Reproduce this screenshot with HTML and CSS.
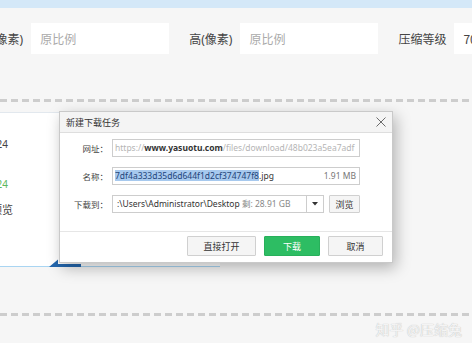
FILE: index.html
```html
<!DOCTYPE html>
<html lang="zh-CN">
<head>
  <meta charset="UTF-8" />
  <title>压缩兔 - 新建下载任务</title>
  <link rel="stylesheet" href="styles.css">
</head>
<body>
  <div class="page">
    <div class="top-band"></div>

    <div class="settings">
      <span class="set-label first">宽(像素)</span>
      <input class="set-input" type="text" placeholder="原比例" />
      <span class="set-label">高(像素)</span>
      <input class="set-input" type="text" placeholder="原比例" />
      <span class="set-label">压缩等级</span>
      <input class="set-input short" type="text" value="70" />
    </div>

    <div class="dashed"></div>

    <div class="workspace">
      <div class="file-card">
        <div class="card-info">
          <div class="info-line">1024×1024</div>
          <div class="info-line ok">1024×1024</div>
          <div class="info-line link">在线预览</div>
        </div>
        <div class="card-foot">
          <svg class="card-tab" width="32" height="8" viewBox="0 0 32 8">
            <polygon points="0,8 9,0.5 9,5 32,5 32,8" fill="#2467ae" />
          </svg>
        </div>
      </div>
    </div>

    <div class="dashed"></div>

    <div class="bottom">
      <span class="watermark">知乎 @压缩兔</span>
    </div>

    <!-- 下载对话框 -->
    <div class="dialog">
      <div class="dialog-title">
        <span>新建下载任务</span>
        <svg class="close" width="10" height="10" viewBox="0 0 10 10">
          <path d="M0.5 0.5 L9.5 9.5 M9.5 0.5 L0.5 9.5" stroke="#6b6b6b" stroke-width="1" fill="none" />
        </svg>
      </div>

      <div class="dialog-body">
        <div class="row">
          <span class="row-label">网址：</span>
          <div class="field url"><span class="dim">https://</span><b>www.yasuotu.com</b><span class="dim">/files/download/48b023a5ea7adf</span></div>
        </div>
        <div class="row">
          <span class="row-label">名称：</span>
          <div class="field name">
            <span><span class="sel">7df4a333d35d6d644f1d2cf374747f8</span>.jpg</span>
            <span class="size">1.91 MB</span>
          </div>
        </div>
        <div class="row">
          <span class="row-label">下载到：</span>
          <div class="field path">:\Users\Administrator\Desktop <span class="dim2">剩: 28.91 GB</span></div>
          <div class="drop">
            <svg width="6" height="4" viewBox="0 0 6 4"><polygon points="0,0 6,0 3,3.5" fill="#333" /></svg>
          </div>
          <button class="btn browse">浏览</button>
        </div>
      </div>

      <div class="dialog-foot">
        <button class="btn open">直接打开</button>
        <button class="btn primary">下载</button>
        <button class="btn cancel">取消</button>
      </div>
    </div>
  </div>
</body>
</html>
```

FILE: styles.css
```css
* { box-sizing: border-box; }

body {
  margin: 0;
  background: #ffffff;
  font-family: "Noto Sans", "Noto Sans CJK SC", sans-serif;
  color: #333;
}

.page {
  position: relative;
  width: 472px;
  height: 343px;
  background: #f6f6f6;
  overflow: hidden;
}

.top-band {
  height: 8px;
  background: #d4e8f8;
}

/* 尺寸设置行 */
.settings {
  display: flex;
  align-items: center;
  margin-top: 15px;
  margin-left: -20px;
  white-space: nowrap;
}

.set-label {
  font-size: 12px;
  color: #444;
  margin-left: 20px;
  margin-right: 8px;
}

.set-label.first {
  margin-left: 0;
}

.set-input {
  width: 138px;
  height: 31px;
  border: none;
  background: #ffffff;
  padding: 0 9px;
  font-family: "Noto Sans CJK SC", sans-serif;
  font-size: 12px;
  color: #444;
  outline: none;
}

.set-input::placeholder {
  color: #aaa;
}

.set-input.short {
  width: 60px;
  padding-left: 9px;
}

.dashed {
  height: 3px;
  background: repeating-linear-gradient(to right, #cdcdcd 0 7px, transparent 7px 11px);
}

.settings + .dashed {
  margin-top: 45px;
}

/* 文件卡片区域 */
.workspace {
  height: 211px;
  padding-top: 10px;
}

.file-card {
  width: 220px;
  height: 155px;
  background: #ffffff;
  border-top: 1px solid #e2e8ee;
  display: flex;
  flex-direction: column;
}

.card-info {
  width: 8px;
  padding-top: 24px;
  display: flex;
  flex-direction: column;
  align-items: flex-end;
  flex: 1;
}

.info-line {
  font-size: 10px;
  line-height: 14px;
  color: #444;
  white-space: nowrap;
}

.info-line.ok {
  color: #5cb85c;
  margin-top: 26px;
}

.info-line.link {
  margin-top: 12px;
  margin-right: -5px;
  font-size: 11px;
}

.card-foot {
  height: 8px;
  border-bottom: 1px solid #a9d5f2;
  display: flex;
  align-items: flex-end;
}

.card-tab {
  display: block;
  margin-left: 49px;
  margin-bottom: -1px;
}

.bottom {
  display: flex;
  justify-content: flex-end;
  padding: 3px 10px 0 0;
}

.watermark {
  font-family: "Noto Sans CJK SC", sans-serif;
  font-size: 14px;
  color: #f4f4f4;
  text-shadow: 0 0 1px #b0b0b0;
}

/* 对话框 */
.dialog {
  position: absolute;
  left: 59px;
  top: 111px;
  width: 334px;
  height: 152px;
  background: #ffffff;
  border: 1px solid #c9c9c9;
  box-shadow: 3px 5px 14px rgba(0, 0, 0, 0.28);
  display: flex;
  flex-direction: column;
}

.dialog-title {
  height: 21px;
  background: #f4f4f4;
  border-bottom: 1px solid #dedede;
  display: flex;
  align-items: center;
  justify-content: space-between;
  padding: 0 6px 0 6px;
  font-size: 9px;
  color: #333;
}

.dialog-body {
  flex: 1;
  padding-top: 6px;
  display: flex;
  flex-direction: column;
  gap: 10px;
}

.row {
  display: flex;
  align-items: center;
  height: 18px;
}

.row-label {
  width: 48px;
  text-align: right;
  font-size: 8.5px;
  color: #444;
  margin-right: 4px;
  white-space: nowrap;
}

.field {
  height: 18px;
  width: 248px;
  border: 1px solid #cdcdcd;
  background: #fff;
  font-size: 8.5px;
  line-height: 16px;
  padding: 0 2px;
  white-space: nowrap;
  overflow: hidden;
  color: #333;
}

.url .dim {
  color: #b5b5b5;
}

.url b {
  color: #333;
  font-weight: 700;
}

.name {
  display: flex;
  justify-content: space-between;
}

.sel {
  background: #a7c9ee;
  color: #23457a;
}

.size {
  color: #777;
  padding-right: 1px;
}

.path {
  width: 195px;
  padding-left: 4px;
}

.dim2 {
  color: #888;
}

.drop {
  width: 17px;
  height: 18px;
  border: 1px solid #cdcdcd;
  border-left: none;
  background: #fff;
  display: flex;
  align-items: center;
  justify-content: center;
}

.btn {
  font-family: "Noto Sans CJK SC", sans-serif;
  font-size: 9px;
  color: #333;
  background: #f5f5f5;
  border: 1px solid #d0d0d0;
  border-radius: 1px;
  padding: 0;
  cursor: pointer;
}

.browse {
  width: 31px;
  height: 18px;
  margin-left: 5px;
}

.dialog-foot {
  height: 31px;
  border-top: 1px solid #e6e6e6;
  display: flex;
  justify-content: flex-end;
  align-items: flex-start;
  gap: 8px;
  padding: 4px 9px 0 0;
}

.dialog-foot .btn {
  height: 20px;
  width: 56px;
}

.dialog-foot .open {
  width: 69px;
}

.dialog-foot .primary {
  background: #2dbd63;
  border-color: #28b05b;
  color: #ffffff;
}

.dialog-foot .cancel {
  width: 55px;
}
```
